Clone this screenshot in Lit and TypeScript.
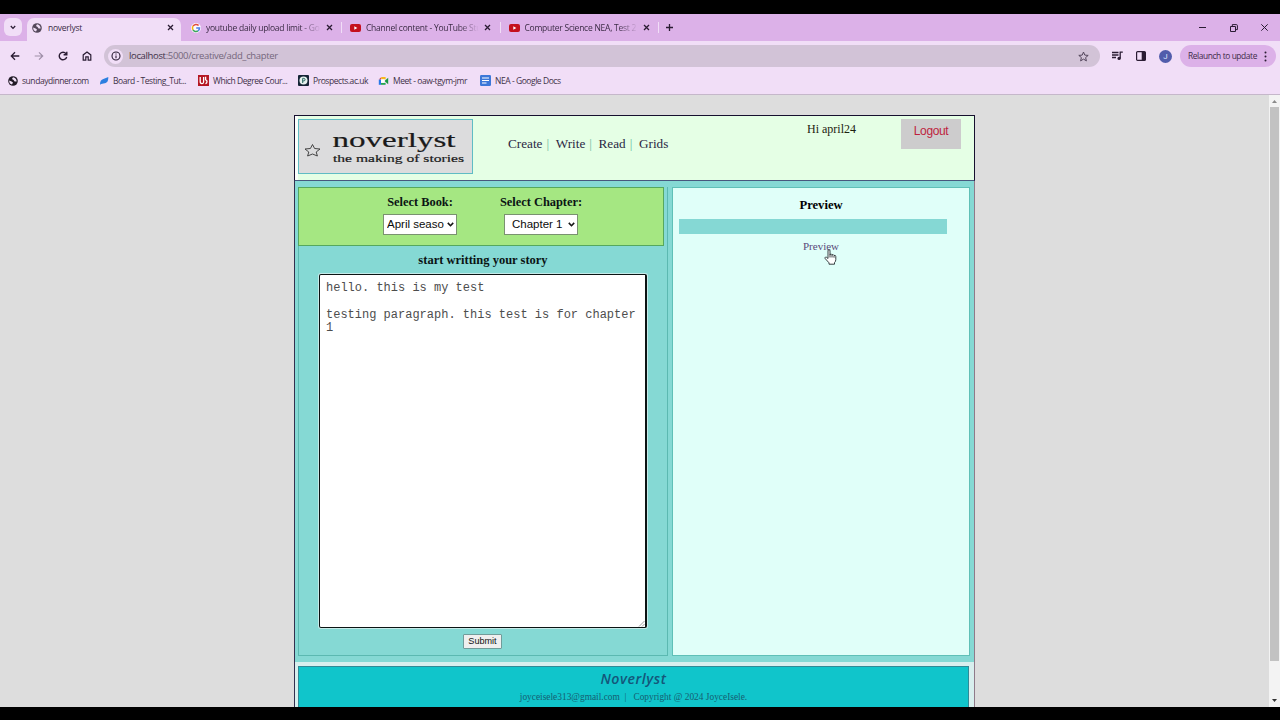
import { LitElement, html, css } from "lit";
import { customElement } from "lit/decorators.js";

const closeX = html`<svg class="x" width="7" height="7" viewBox="0 0 7 7"><path d="M1 1L6 6M6 1L1 6" stroke="#2a1c33" stroke-width="1.3" /></svg>`;
const youtube = html`<svg width="11" height="8" viewBox="0 0 11 8"><rect width="11" height="8" rx="2" fill="#c4101c" /><path d="M4.3 2.2L7.3 4L4.3 5.8Z" fill="#fff" /></svg>`;
const google = html`<svg width="10" height="10" viewBox="0 0 10 10"><circle cx="5" cy="5" r="5" fill="#fdf8ff" /><g fill="none" stroke-width="1.5"><path d="M7.6 2.6A3.5 3.5 0 0 0 2 3.2" stroke="#e04a3c" /><path d="M2 3.2A3.5 3.5 0 0 0 2 6.8" stroke="#f2b80c" /><path d="M2 6.8A3.5 3.5 0 0 0 7 7.9" stroke="#3ba55b" /><path d="M7 7.9A3.4 3.4 0 0 0 8.5 5H5.2" stroke="#4a80e8" /></g></svg>`;
const globe = (color: string) => html`<svg width="10" height="10" viewBox="0 0 10 10"><circle cx="5" cy="5" r="4.8" fill=${color} /><path d="M1.2 4.4L3.6 5.4L5 6.6L4 8.6C2.2 8 1 6.4 1.2 4.4ZM5 1.3L4 3L5.6 4L6.6 5.6L8.6 5.4C8.8 3.4 7.2 1.6 5 1.3Z" fill="#f0dff6" /></svg>`;

@customElement("browser-tabs")
class BrowserTabs extends LitElement {
  static styles = css`
    :host { display: flex; height: 27px; background: #dcb1e8; align-items: flex-end; font: 8.5px/12px "Open Sans", "Noto Sans", sans-serif; letter-spacing: -0.25px; color: #3b2b45; box-sizing: border-box; }
    svg { display: block; flex: none; }
    .search { width: 18px; height: 18px; margin: 0 5px 5px 4px; border-radius: 6px; background: #f1def7; display: grid; place-items: center; }
    .tab { height: 27px; box-sizing: border-box; display: flex; align-items: center; flex: none; }
    .tab.active { width: 154px; height: 23px; padding: 0 7px 4px 5px; border-radius: 7px 7px 0 0; background: #f1def7; }
    .title { white-space: nowrap; flex: 1; min-width: 0; margin-left: 5px; }
    .fade { -webkit-mask-image: linear-gradient(to right, #000 82%, transparent); mask-image: linear-gradient(to right, #000 82%, transparent); }
    .active .title { margin-left: 6px; }
    .plain { width: 149.5px; padding-right: 8.5px; }
    .plain .title { margin-right: 5px; }
    .first { margin-left: 10px; width: 150px; }
    .sep { width: 1px; height: 11px; background: #f1def7; margin: 0 8px 8px 0; }
    .sep.last { margin-right: 0; }
    .plus { margin: 0 0 10px 7px; }
    .spacer { flex: 1; }
    .win { display: flex; align-items: center; height: 27px; gap: 23.5px; padding-right: 12px; }
  `;
  render() {
    return html`
      <div class="search"><svg width="6" height="5" viewBox="0 0 6 5"><path d="M.8 1L3 3.4L5.2 1" fill="none" stroke="#2a1c33" stroke-width="1.3" /></svg></div>
      <div class="tab active">${globe("#54485a")}<span class="title">noverlyst</span>${closeX}</div>
      <div class="tab plain first">${google}<span class="title fade">youtube daily upload limit - Go</span>${closeX}</div>
      <div class="sep"></div>
      <div class="tab plain">${youtube}<span class="title fade">Channel content - YouTube Stu</span>${closeX}</div>
      <div class="sep"></div>
      <div class="tab plain">${youtube}<span class="title fade">Computer Science NEA, Test 2 -</span>${closeX}</div>
      <div class="sep last"></div>
      <svg class="plus" width="7" height="7" viewBox="0 0 7 7"><path d="M3.5 0V7M0 3.5H7" stroke="#2a1c33" stroke-width="1.3" /></svg>
      <div class="spacer"></div>
      <div class="win">
        <svg width="7" height="7" viewBox="0 0 7 7"><path d="M0 3.5H7" stroke="#2a1c33" /></svg>
        <svg width="8" height="8" viewBox="0 0 8 8"><path d="M.5 2.5H5.5V7.5H.5ZM2.3 2.3V.6H6.4Q7.4 .6 7.4 1.6V5.6H5.7" fill="none" stroke="#2a1c33" /></svg>
        <svg width="7" height="7" viewBox="0 0 7 7"><path d="M.3 .3L6.7 6.7M6.7 .3L.3 6.7" stroke="#2a1c33" /></svg>
      </div>`;
  }
}

@customElement("browser-toolbar")
class BrowserToolbar extends LitElement {
  static styles = css`
    :host { display: flex; height: 30px; background: #f1def7; align-items: center; box-sizing: border-box; padding: 0 4px 0 10px; font: 9px/12px "Open Sans", "Noto Sans", sans-serif; color: #4a3c52; }
    svg { display: block; flex: none; }
    .nav { display: flex; gap: 14px; align-items: center; width: 94px; }
    .url { width: 996px; height: 22px; border-radius: 11px; background: #d2c3d7; display: flex; align-items: center; box-sizing: border-box; padding: 0 11px 0 4px; }
    .info { width: 15px; height: 15px; border-radius: 50%; background: #f1def7; display: grid; place-items: center; }
    .address { flex: 1; margin-left: 6px; font-size: 9.5px; letter-spacing: -0.35px; color: #74667c; }
    .host { color: #3f3148; }
    .tools { display: flex; align-items: center; gap: 13px; margin-left: 12px; flex: 1; }
    .avatar { width: 13px; height: 13px; border-radius: 50%; background: #515cab; color: #dfe4ff; display: grid; place-items: center; font: 8px/13px Roboto, sans-serif; }
    .relaunch { height: 22px; width: 96px; border-radius: 11px; background: #dcb1e8; display: flex; align-items: center; justify-content: space-between; box-sizing: border-box; padding: 0 9px 0 8px; white-space: nowrap; font-size: 8.4px; letter-spacing: -0.4px; color: #3f2b48; }
  `;
  render() {
    return html`
      <div class="nav">
        <svg width="10" height="10" viewBox="0 0 10 10"><path d="M9.3 5H1.5M5 1.3L1.3 5L5 8.7" fill="none" stroke="#2a1c33" stroke-width="1.3" /></svg>
        <svg width="10" height="10" viewBox="0 0 10 10"><path d="M.7 5H8.5M5 1.3L8.7 5L5 8.7" fill="none" stroke="#9f8fa8" stroke-width="1.2" /></svg>
        <svg width="10" height="10" viewBox="0 0 10 10"><path d="M8.7 6A3.8 3.8 0 1 1 8 2.6M8.8 .7V3.8H5.6" fill="none" stroke="#2a1c33" stroke-width="1.4" /></svg>
        <svg width="10" height="10" viewBox="0 0 10 10"><path d="M1.2 9.2V3.9L5 1L8.8 3.9V9.2H6.2V5.9H3.8V9.2Z" fill="none" stroke="#2a1c33" stroke-width="1.2" /></svg>
      </div>
      <div class="url">
        <div class="info"><svg width="10" height="10" viewBox="0 0 10 10"><circle cx="5" cy="5" r="4" fill="none" stroke="#2a1c33" stroke-width="1.1" /><path d="M5 4.4V7.2M5 2.6V3.6" stroke="#2a1c33" stroke-width="1.1" /></svg></div>
        <span class="address"><span class="host">localhost</span>:5000/creative/add_chapter</span>
        <svg width="11" height="11" viewBox="0 0 11 11"><path d="M5.5 1L6.8 4.1L10.2 4.4L7.6 6.6L8.4 9.9L5.5 8.1L2.6 9.9L3.4 6.6L.8 4.4L4.2 4.1Z" fill="none" stroke="#54465c" /></svg>
      </div>
      <div class="tools">
        <svg width="11" height="10" viewBox="0 0 11 10"><path d="M0 1.5H6.5M0 4H6.5M0 6.5H4M8.2 7.5V1.2H10.8" fill="none" stroke="#2a1c33" stroke-width="1.3" /><circle cx="7.1" cy="7.4" r="1.6" fill="#2a1c33" /></svg>
        <svg width="10" height="10" viewBox="0 0 10 10"><rect x=".6" y=".6" width="8.8" height="8.8" rx="1" fill="none" stroke="#2a1c33" stroke-width="1.2" /><rect x="5.7" y="1" width="3.6" height="8" fill="#2a1c33" /></svg>
        <div class="avatar">J</div>
      </div>
      <div class="relaunch"><span>Relaunch to update</span><svg width="3" height="11" viewBox="0 0 3 11"><g fill="#2a1c33"><circle cx="1.5" cy="1.5" r="1" /><circle cx="1.5" cy="5.5" r="1" /><circle cx="1.5" cy="9.5" r="1" /></g></svg></div>`;
  }
}

@customElement("browser-bookmarks")
class BrowserBookmarks extends LitElement {
  static styles = css`
    :host { display: flex; height: 24px; box-sizing: border-box; background: #f1def7; border-bottom: 1px solid #c5b7ca; padding: 0 0 4px 8px; align-items: center; font: 8.5px/12px "Open Sans", "Noto Sans", sans-serif; letter-spacing: -0.45px; color: #3f3148; }
    svg { display: block; flex: none; }
    .item { display: flex; align-items: center; gap: 4px; white-space: nowrap; box-sizing: border-box; flex: none; }
    .a { width: 91px; } .b { width: 99px; } .c { width: 100px; } .d { width: 80px; } .e { width: 102px; }
  `;
  render() {
    return html`
      <div class="item a">${globe("#211a26")}<span>sundaydinner.com</span></div>
      <div class="item b"><svg width="10" height="10" viewBox="0 0 10 10"><path d="M1 8.8C1 5.4 2 3.6 4.4 3L9.3 1C9.3 5 8.4 6.8 5.8 7.2C4 7.4 2.6 7.6 1 8.8Z" fill="#2c7fe0" /></svg><span>Board - Testing_Tut...</span></div>
      <div class="item c"><svg width="11" height="11" viewBox="0 0 11 11"><rect width="11" height="11" fill="#b51623" /><path d="M2.2 2V6.6Q2.2 8.6 3.9 8.6T5.6 6.6V2M7.6 1.8V5M7.4 5.2Q9 5 9 6.8T7.4 8.6" fill="none" stroke="#fff" stroke-width="1.3" /></svg><span>Which Degree Cour...</span></div>
      <div class="item d"><svg width="11" height="11" viewBox="0 0 11 11"><rect width="11" height="11" rx="1" fill="#152536" /><circle cx="5.5" cy="5.5" r="4" fill="#e6f2ee" /><path d="M4.7 8V3.4H5.8A1.2 1.2 0 0 1 5.8 5.9H4.7" fill="none" stroke="#27685f" /></svg><span>Prospects.ac.uk</span></div>
      <div class="item e"><svg width="11" height="10" viewBox="0 0 11 10"><path d="M.8 3.6L3.4 1V3.6Z" fill="#e34235" /><path d="M3.4 1H7.6V3.3H3.4Z" fill="#f6ba18" /><path d="M.8 3.6H3V8.8H.8Z" fill="#2878e8" /><path d="M3 6.8H7.6V8.8H3Z" fill="#25a650" /><path d="M6.5 5L10.2 1.8V8.3Z" fill="#17983f" /><path d="M3 3.4H6.6V6.8H3Z" fill="#fff" /></svg><span>Meet - oaw-tgym-jmr</span></div>
      <div class="item"><svg width="11" height="11" viewBox="0 0 11 11"><rect width="11" height="11" rx="1.2" fill="#3c78d8" /><path d="M2 3H9M2 5.5H9M2 8H6.5" stroke="#fff" stroke-width="1.2" /></svg><span>NEA - Google Docs</span></div>`;
  }
}

@customElement("story-page")
class StoryPage extends LitElement {
  static styles = css`
    :host { display: flex; height: 612px; overflow: hidden; background: #dddddd; font-family: "Liberation Serif", serif; color: #0b1414; }
    * { box-sizing: border-box; }
    .scroll { width: 11px; background: #f3f3f3; display: flex; flex-direction: column; align-items: center; padding: 4px 0 3px; }
    .thumb { width: 9px; height: 554px; background: #c2c2c2; margin-top: 4px; }
    .scroll .down { margin-top: auto; }
    svg { display: block; }
    .canvas { flex: 1; padding: 20px 0 0 294px; }
    .book { width: 681px; height: 592px; border: 1px solid #33304f; border-width: 1px 1px 0 1px; border-right-color: #8f7a89; background: #d8efee; display: flex; flex-direction: column; }
    header { height: 66px; margin: -1px -1px 0; border: 1px solid #17102f; border-bottom-color: #48587e; background: #e5ffe5; display: flex; flex: none; box-shadow: inset 3px 0 #fbfffb; }
    .logo { width: 175px; height: 55px; margin: 3px 0 0 3px; background: #dcdcdd; border: 1px solid #5fbcc4; }
    nav { display: flex; margin: 20px 0 0 35px; font-size: 13.2px; line-height: 16px; color: #2a2744; width: 299px; }
    nav span { white-space: pre; }
    nav i { font-style: normal; color: #6fc0a4; margin: 0 6.7px 0 4px; }
    .hi { font-size: 12px; line-height: 14px; margin-top: 6px; width: 94px; color: #1c220f; }
    .logout { width: 60px; height: 30px; margin-top: 3px; background: #cdcccd; color: #bd1f3e; font: 12px/25px "Liberation Sans", Arial, sans-serif; letter-spacing: -0.4px; text-align: center; }
    main { height: 481px; flex: none; background: #85d9d4; padding: 6px 4px 6px 3px; display: flex; gap: 4px; }
    .editor { width: 370px; height: 469px; border: 1px solid #5bb9b1; display: flex; flex-direction: column; align-items: center; border-top: 0; }
    .pick { align-self: stretch; height: 59px; margin: 0 3px 0 -1px; border: 1px solid #55a85e; background: #a5e782; display: flex; padding: 7px 0 0 84px; flex: none; }
    .field { width: 74px; display: flex; flex-direction: column; align-items: center; font-weight: bold; font-size: 12.4px; line-height: 15px; white-space: nowrap; gap: 4px; }
    .field + .field { margin-left: 47px; }
    .select { width: 74px; height: 21px; background: #fff; border: 1px solid #7a9270; font: 11.5px/19px "Liberation Sans", Arial, sans-serif; display: flex; align-items: center; justify-content: space-between; padding: 0 2px 0 3px; color: #0b0b0b; }
    .select .v { width: 57px; overflow: hidden; flex: none; }
    .select .mid { padding-left: 4px; }
    h2 { font-size: 12.5px; line-height: 15px; margin: 7px 0 6px; }
    .area { width: 328px; height: 354px; flex: none; border: 1px solid #0c1414; border-right-width: 2px; border-radius: 2px; background: #fff; font: 12px/13.4px "Liberation Mono", monospace; color: #4d4d4d; white-space: pre-wrap; padding: 7px 5px 6px 6px; box-shadow: 0 0 0 1px #c5ebe9; display: flex; flex-direction: column; justify-content: space-between; }
    .area svg { align-self: flex-end; margin: 0 -5px -6px 0; }
    .submit { margin: 6px 1px 0 0; width: 39px; height: 15px; background: #efefef; border: 1px solid #719c9a; font: 9.1px/13px "Liberation Sans", Arial, sans-serif; text-align: center; border-radius: 1px; color: #111; }
    .preview { width: 298px; height: 469px; background: #e0fff9; border: 1px solid #5fc0b7; display: flex; flex-direction: column; padding: 0 22px 0 6px; align-items: center; }
    .preview h2 { margin: 10px 0 6px 16px; font-size: 12.6px; color: #000; }
    .bar { width: 268px; height: 15px; background: #85d8d4; }
    .link { font-size: 11px; line-height: 14px; margin: 5px 0 0 16px; color: #5a4a7a; position: relative; }
    .hand { position: absolute; left: 21px; top: 10px; }
    footer { margin: 4px 5px 0 3px; height: 42px; flex: none; background: #10c5cb; border: 1px solid #308a96; border-bottom-color: #188f9c; display: flex; flex-direction: column; align-items: center; color: #14577a; }
    .brand { font: italic 600 14.2px/16px "Open Sans", sans-serif; letter-spacing: 0.55px; margin-top: 4px; }
    .copy { font-size: 9.4px; line-height: 12px; margin-top: 4px; white-space: pre; color: #155f72; }
  `;
  arrow = html`<svg width="7" height="5" viewBox="0 0 7 5"><path d="M.8 .9L3.5 3.7L6.2 .9" fill="none" stroke="#151515" stroke-width="1.6" /></svg>`;
  render() {
    return html`
      <div class="canvas">
        <div class="book">
          <header>
            <div class="logo">
              <svg width="173" height="53" viewBox="0 0 173 53" font-family="Liberation Serif, serif" fill="#1a1a1a">
                <path d="M13.5 24.5L15.6 28.5L21 29L17.2 32L18.4 36L13.5 34L8.6 36L9.8 32L6 29L11.4 28.5Z" fill="none" stroke="#333" stroke-width=".9" />
                <text x="33.5" y="27" font-size="22" textLength="123" lengthAdjust="spacingAndGlyphs" stroke="#1a1a1a" stroke-width=".2">noverlyst</text>
                <text x="34" y="42" font-size="11" textLength="131" lengthAdjust="spacingAndGlyphs" stroke="#1a1a1a" stroke-width=".2">the making of stories</text>
              </svg>
            </div>
            <nav><span>Create</span><i>|</i><span>Write</span><i>|</i><span>Read</span><i>|</i><span>Grids</span></nav>
            <div class="hi">Hi april24</div>
            <div class="logout">Logout</div>
          </header>
          <main>
            <section class="editor">
              <div class="pick">
                <div class="field">Select Book:<div class="select"><span class="v">April season</span>${this.arrow}</div></div>
                <div class="field">Select Chapter:<div class="select"><span class="v mid">Chapter 1</span>${this.arrow}</div></div>
              </div>
              <h2>start writting your story</h2>
              <div class="area"><span>hello. this is my test

testing paragraph. this test is for chapter 1</span><svg width="7" height="7" viewBox="0 0 7 7"><path d="M1 6.5L6.5 1M4 6.5L6.5 4" stroke="#777" stroke-width=".7" /></svg></div>
              <div class="submit">Submit</div>
            </section>
            <section class="preview">
              <h2>Preview</h2>
              <div class="bar"></div>
              <div class="link">Preview<svg class="hand" width="14" height="16" viewBox="0 0 14 16"><path d="M4 9.5V1.8Q4 .7 5 .7T6 1.8V6L6.2 5.2Q7.6 4.7 8 5.8Q9.5 5.2 10 6.4Q11.8 6 11.8 7.6V10.5Q11.8 12.6 10.5 13.6V15.2H5V13.8L1.2 9.6Q.6 8.6 1.5 8.1Q2.5 7.8 4 9.5ZM6 6V8.5M8 6V8.5M10 6.6V8.7" fill="#fff" stroke="#222b2e" stroke-width=".9" /></svg></div>
            </section>
          </main>
          <footer><div class="brand">Noverlyst</div><div class="copy">joyceisele313@gmail.com  |   Copyright @ 2024 JoyceIsele.</div></footer>
        </div>
      </div>
      <div class="scroll">
        <svg width="7" height="4" viewBox="0 0 7 4"><path d="M1 4L3.5 1L6 4Z" fill="#8a8a8a" /></svg>
        <div class="thumb"></div>
        <svg class="down" width="7" height="6" viewBox="0 0 7 6"><path d="M1 1L3.5 4L6 1Z" fill="#333" /></svg>
      </div>`;
  }
}

@customElement("app-root")
class AppRoot extends LitElement {
  static styles = css`
    :host { display: block; width: 1280px; height: 720px; box-sizing: border-box; background: #000; padding-top: 14px; overflow: hidden; }
  `;
  render() {
    return html`<browser-tabs></browser-tabs><browser-toolbar></browser-toolbar><browser-bookmarks></browser-bookmarks><story-page></story-page>`;
  }
}
